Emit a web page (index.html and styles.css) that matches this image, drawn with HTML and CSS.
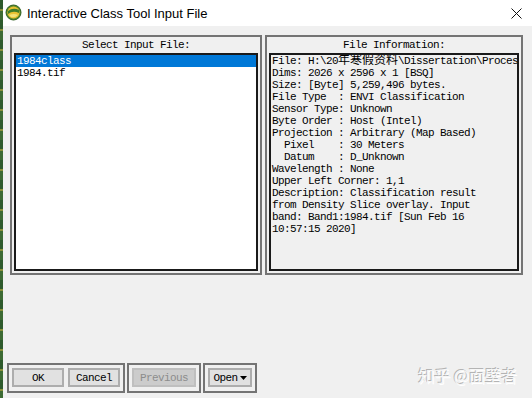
FILE: index.html
```html
<!DOCTYPE html>
<html lang="en">
<head>
    <meta charset="UTF-8">
    <title>Interactive Class Tool Input File</title>
    <link rel="stylesheet" href="styles.css">
</head>
<body>
    <div class="desktop-edge"></div>
    <div class="window">
        <div class="titlebar">
            <svg class="app-icon" width="17" height="17" viewBox="0 0 17 17">
                <circle cx="8.5" cy="8.5" r="7.5" fill="#5b8a2a"/>
                <circle cx="8.5" cy="8.5" r="6" fill="#e9c233"/>
                <path d="M3 7 Q8 3 14 6 L14 9 Q8 6 3 10 Z" fill="#3f7d2a"/>
                <path d="M4 11 Q9 9 13 11 Q10 14 6 13 Z" fill="#f2e27a"/>
                <circle cx="8.5" cy="8.5" r="7.5" fill="none" stroke="#2f5f22" stroke-width="1"/>
            </svg>
            <span class="title">Interactive Class Tool Input File</span>
            <svg class="close" width="11" height="11" viewBox="0 0 11 11">
                <path d="M0.5 0.5 L10.5 10.5 M10.5 0.5 L0.5 10.5" stroke="#111" stroke-width="1"/>
            </svg>
        </div>

        <div class="client">
            <div class="panels">
                <div class="frame frame-left">
                    <div class="frame-label">Select Input File:</div>
                    <div class="file-list">
                        <div class="file-item selected">1984class</div>
                        <div class="file-item">1984.tif</div>
                    </div>
                </div>
                <div class="frame frame-right">
                    <div class="frame-label">File Information:</div>
<div class="info-box"><div class="path-line">File: H:\20<span class="cjk">年寒假资料</span>\Dissertation\Proces</div>Dims: 2026 x 2596 x 1 [BSQ]
Size: [Byte] 5,259,496 bytes.
File Type  : ENVI Classification
Sensor Type: Unknown
Byte Order : Host (Intel)
Projection : Arbitrary (Map Based)
  Pixel    : 30 Meters
  Datum    : D_Unknown
Wavelength : None
Upper Left Corner: 1,1
Description: Classification result
from Density Slice overlay. Input
band: Band1:1984.tif [Sun Feb 16
10:57:15 2020]</div>
                </div>
            </div>

            <div class="button-bar">
                <div class="frame btn-group">
                    <button class="btn btn-ok">OK</button>
                    <button class="btn btn-cancel">Cancel</button>
                </div>
                <div class="frame btn-group">
                    <button class="btn btn-prev" disabled>Previous</button>
                </div>
                <div class="frame btn-group">
                    <button class="btn btn-open">Open<svg class="arrow" width="7" height="4" viewBox="0 0 7 4"><path d="M0 0 H7 L3.5 4 Z" fill="#000"/></svg></button>
                </div>
            </div>

            <div class="watermark">知乎 @面壁者</div>
        </div>
    </div>
</body>
</html>
```

FILE: styles.css
```css
* {
    box-sizing: border-box;
}
body {
    margin: 0;
    width: 532px;
    height: 398px;
    overflow: hidden;
    display: flex;
    background: #f0f0f0;
    font-family: "Liberation Mono", "Noto Sans CJK SC", monospace;
    font-size: 11px;
    letter-spacing: -0.6px;
    color: #000;
}
.desktop-edge {
    width: 3px;
    background: repeating-linear-gradient(180deg, #2e5a2c 0, #2e5a2c 9px, #8a8f3a 9px, #8a8f3a 11px, #3d6b34 11px, #3d6b34 20px);
}
.window {
    flex: 1;
    display: flex;
    flex-direction: column;
}
.titlebar {
    height: 26px;
    background: #fff;
    display: flex;
    align-items: center;
}
.app-icon {
    margin-left: 2px;
    margin-top: -2px;
}
.title {
    margin-left: 5px;
    font-family: "Liberation Sans", "Noto Sans", sans-serif;
    font-size: 13px;
    letter-spacing: 0;
    color: #000;
}
.close {
    margin-left: auto;
    margin-right: 10px;
}
.client {
    flex: 1;
    position: relative;
}
.panels {
    display: flex;
    gap: 3px;
    padding: 9px 0 0 7px;
}
.frame {
    border: 2px solid #747474;
    background: #f0f0f0;
}
.frame-left,
.frame-right {
    height: 240px;
    padding: 0 2px 2px 2px;
    display: flex;
    flex-direction: column;
}
.frame-left {
    width: 252px;
}
.frame-right {
    width: 258px;
}
.frame-label {
    height: 16px;
    line-height: 16px;
    text-align: center;
    white-space: pre;
}
.file-list {
    flex: 1;
    border: 2px solid #1a1a1a;
    background: #fff;
}
.file-item {
    height: 12px;
    line-height: 12px;
    padding-left: 1px;
    white-space: pre;
}
.file-item.selected {
    background: #0078d7;
    color: #fff;
}
.info-box {
    flex: 1;
    border: 2px solid #1a1a1a;
    padding-left: 1px;
    line-height: 12px;
    white-space: pre;
    overflow: hidden;
}
.path-line {
    height: 12px;
    overflow: hidden;
}
.cjk {
    font-size: 12px;
    line-height: 12px;
    letter-spacing: 0;
}
.button-bar {
    display: flex;
    gap: 2px;
    margin-top: 88px;
    padding-left: 4px;
}
.btn-group {
    display: flex;
    gap: 4px;
    padding: 3px 3px 4px 3px;
}
.btn {
    height: 19px;
    padding: 0;
    border: 2px solid #adadad;
    background: #e1e1e1;
    font-family: inherit;
    font-size: 11px;
    letter-spacing: -0.6px;
    color: #000;
    display: flex;
    align-items: center;
    justify-content: center;
}
.btn-ok,
.btn-cancel {
    width: 52px;
}
.btn-prev {
    width: 64px;
    background: #cccccc;
    border-color: #bfbfbf;
    color: #8c8c8c;
}
.btn-open {
    width: 44px;
}
.arrow {
    margin-left: 2px;
}
.watermark {
    position: absolute;
    right: 15px;
    bottom: 14px;
    font-family: "Noto Sans CJK SC", sans-serif;
    font-size: 16px;
    letter-spacing: 0;
    line-height: 18px;
    color: #f6f6f6;
    text-shadow: -1px -1px 0 #b4b4b4, 1px 1px 0 #ffffff;
}
```
